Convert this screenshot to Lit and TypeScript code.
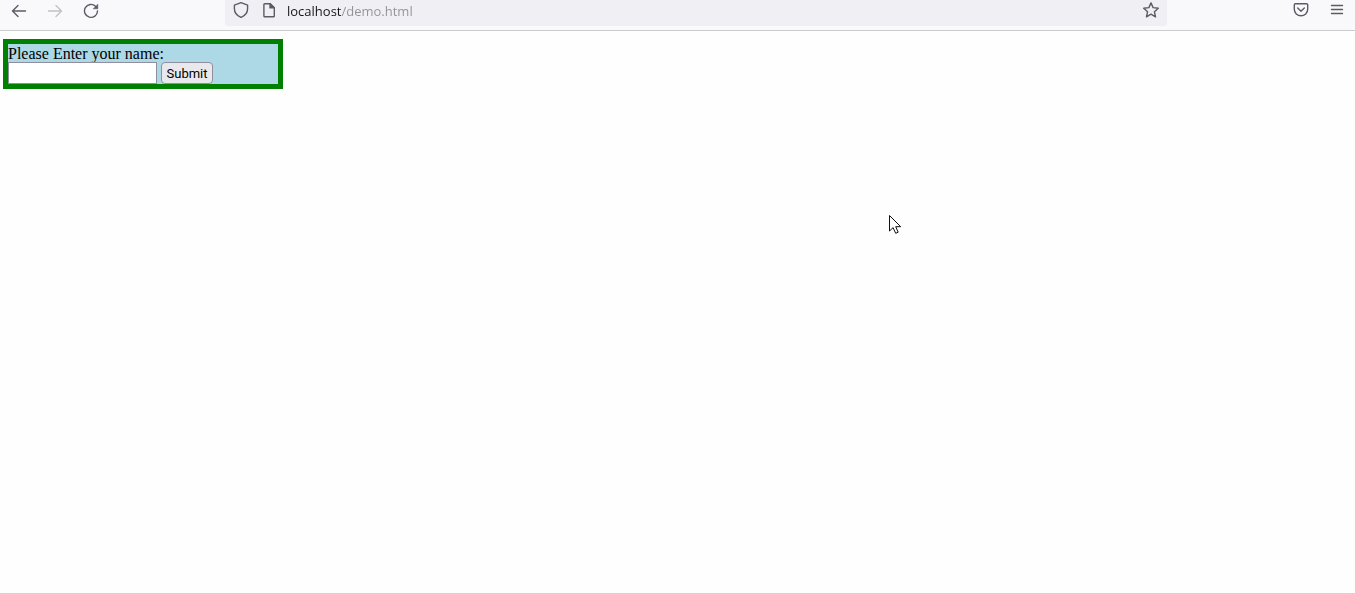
import { LitElement, html, css } from "lit";
import { customElement, state } from "lit/decorators.js";

@customElement("browser-toolbar")
export class BrowserToolbar extends LitElement {
  static styles = css`
    :host {
      display: block;
      background: #f9f9fb;
      border-bottom: 1px solid #cccccf;
    }
    .bar {
      display: flex;
      align-items: flex-start;
      height: 30px;
    }
    .nav {
      display: flex;
      flex: 0 0 221px;
      gap: 6px;
      padding-left: 4px;
    }
    .address {
      display: flex;
      flex: 1;
      min-width: 0;
      height: 26px;
      background: #f0f0f4;
      border-radius: 0 0 4px 4px;
    }
    .tools {
      display: flex;
      flex: 0 0 188px;
      box-sizing: border-box;
      justify-content: flex-end;
      gap: 12px;
      padding-right: 6px;
    }
    button {
      display: grid;
      place-items: center;
      flex: none;
      margin: 0;
      padding: 0;
      border: 0;
      background: none;
      color: #5b5b66;
      width: 24px;
      height: 20px;
    }
    .nav button {
      width: 30px;
      height: 22px;
    }
    .address .shield,
    .address .star {
      width: 32px;
    }
    button:disabled {
      color: #c1c1c6;
    }
    svg {
      display: block;
      width: 16px;
      height: 16px;
      fill: none;
      stroke: currentColor;
      stroke-width: 1.4;
      stroke-linecap: round;
      stroke-linejoin: round;
    }
    input {
      flex: 1;
      min-width: 0;
      height: 22px;
      margin: 0;
      padding: 0 0 0 6px;
      border: 0;
      outline: 0;
      font: 13px/22px "Open Sans", "Noto Sans", sans-serif;
      color: #15141a;
      -webkit-text-fill-color: transparent;
      background: linear-gradient(90deg, #15141a 60px, #929297 60px);
      -webkit-background-clip: text;
      background-clip: text;
    }
  `;

  render() {
    return html`
      <header class="bar">
        <nav class="nav" aria-label="History">
          <button aria-label="Back">
            <svg viewBox="0 0 16 16"><path d="M14.500 8H1.500M7 2.500 1.500 8 7 13.500" /></svg>
          </button>
          <button aria-label="Forward" disabled>
            <svg viewBox="0 0 16 16"><path d="M1.500 8h13M9 2.500l5.500 5.500L9 13.500" /></svg>
          </button>
          <button aria-label="Reload">
            <svg viewBox="0 0 16 16">
              <path d="M12.500 3.200A6.500 6.500 0 1 0 14.500 8" />
              <path d="M14.800 1.500v4.300h-4.300z" fill="currentColor" stroke-width=".6" />
            </svg>
          </button>
        </nav>
        <div class="address">
          <button class="shield" aria-label="Tracking protection">
            <svg viewBox="0 0 16 16">
              <path d="M8 .7 14.600 3.200v3.300c0 4-2.600 7.300-6.600 8.900-4-1.600-6.600-4.900-6.600-8.900V3.200z" />
            </svg>
          </button>
          <button aria-label="Site information">
            <svg viewBox="0 0 16 16">
              <path d="M3.700 1.700h5.600l4 4v8.200a.8.8 0 0 1-.8.800H3.700a.8.8 0 0 1-.8-.800V2.500a.8.8 0 0 1 .8-.8z" />
              <path d="M9 1.700v4.200h4.300z" fill="currentColor" />
            </svg>
          </button>
          <input aria-label="Address" type="text" spellcheck="false" value="localhost/demo.html" />
          <button class="star" aria-label="Bookmark this page">
            <svg viewBox="0 0 16 16">
              <path d="m8 .9 2.100 4.700 5.200.6-3.900 3.500 1.100 5.100L8 12.200l-4.500 2.600 1.100-5.100L.7 6.200l5.200-.6z" />
            </svg>
          </button>
        </div>
        <div class="tools">
          <button aria-label="Save to Pocket">
            <svg viewBox="0 0 16 16">
              <path d="M2.500 1.700h11a1.200 1.200 0 0 1 1.200 1.200v4.400a6.700 6.500 0 0 1-13.400 0V2.900a1.200 1.200 0 0 1 1.200-1.200z" />
              <path d="M4.700 6 8 9.200 11.300 6" />
            </svg>
          </button>
          <button aria-label="Open application menu">
            <svg viewBox="0 0 16 16"><path d="M2.500 3.500h11M2.500 7.500h11M2.500 11.500h11" /></svg>
          </button>
        </div>
      </header>
    `;
  }
}

@customElement("app-root")
export class AppRoot extends LitElement {
  static styles = css`
    :host {
      display: block;
      position: relative;
      min-height: 100vh;
      background: #fefefe;
    }
    main {
      padding: 8px 3px;
    }
    .box {
      box-sizing: border-box;
      width: 280px;
      max-width: 100%;
      border: 5px solid #008000;
      background: #add8e6;
      color: #000;
      font: 16px/18px "Liberation Serif", serif;
    }
    label {
      display: block;
      height: 18px;
      line-height: 20px;
    }
    .row {
      display: flex;
      gap: 4px;
    }
    input,
    button {
      box-sizing: border-box;
      height: 22px;
      margin: 0;
      border: 1px solid #8f8f9d;
      font: 13px/16px Roboto, "Open Sans", sans-serif;
      color: #000;
    }
    input {
      width: 149px;
      padding: 1px 2px;
      background: #fff;
    }
    button {
      padding: 2px 0 0;
      width: 52px;
      border-radius: 4px;
      background: #e9e9ed;
    }
    .pointer {
      position: absolute;
      left: 889px;
      top: 214px;
      width: 13px;
      height: 21px;
      pointer-events: none;
    }
  `;

  @state() private name = "";

  private onInput(e: Event) {
    this.name = (e.target as HTMLInputElement).value;
  }

  render() {
    return html`
      <browser-toolbar></browser-toolbar>
      <main>
        <form class="box" @submit=${(e: Event) => e.preventDefault()}>
          <label for="name">Please Enter your name:</label>
          <div class="row">
            <input id="name" type="text" .value=${this.name} @input=${this.onInput} />
            <button type="submit">Submit</button>
          </div>
        </form>
      </main>
      <svg class="pointer" viewBox="0 0 13 21" aria-hidden="true">
        <path
          d="M.5 1.500v15.500l3.600-3.400 2.600 5.700 2.500-1.100-2.500-5.500h5z"
          fill="#fff"
          stroke="#111"
        />
      </svg>
    `;
  }
}
